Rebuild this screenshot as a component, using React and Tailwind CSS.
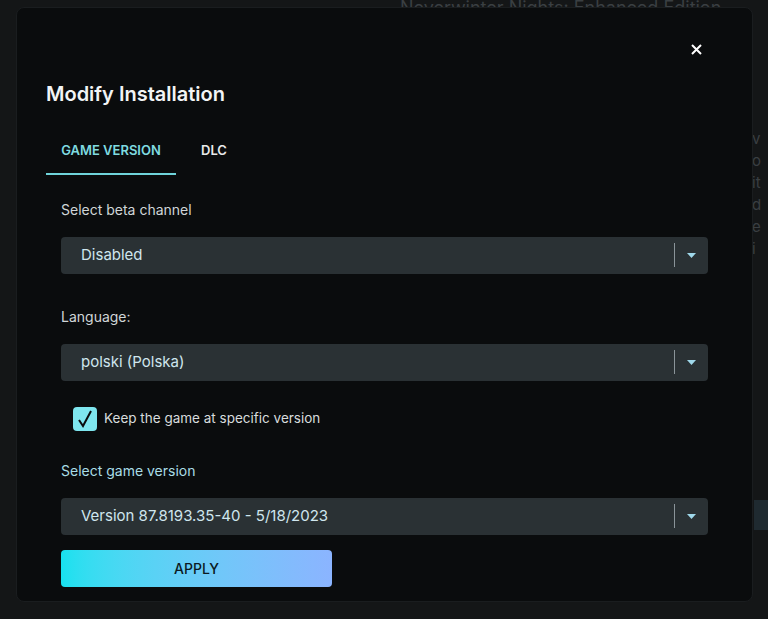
export default function App() {
  const Select = ({ value }) => (
    <div className="flex items-center h-[37px] rounded bg-[#2a3134] pl-5 pr-3 text-[#cfe6ee] text-[15px]">
      <span className="flex-1">{value}</span>
      <div className="w-px h-[24px] bg-[#8a9499] mr-3" />
      <svg width="9" height="5" viewBox="0 0 9 5"><path d="M0 0h9L4.5 5z" fill="#9fd8ea" /></svg>
    </div>
  );
  return (
    <div className="w-[768px] h-[619px] bg-[#141617] relative overflow-hidden" style={{ fontFamily: "Inter, 'Noto Sans', sans-serif" }}>
      <div className="absolute left-[400px] -top-[6px] text-[#3a3f42] text-[18px] whitespace-nowrap">Neverwinter Nights: Enhanced Edition</div>
      <div className="absolute left-[752px] top-[128px] text-[#3a3f42] text-[15px] leading-[22px]">v<br/>o<br/>it<br/>d<br/>e<br/>i</div>
      <div className="absolute left-[754px] top-[500px] w-[14px] h-[30px] bg-[#1f2a30]" />
      <div className="absolute left-[16px] top-[7px] w-[737px] h-[595px] rounded-lg bg-[#0a0c0d] border border-[#1a1d1f] px-[29px]">
        <div className="flex justify-end pt-[36px] pr-[21px]">
          <svg width="11" height="11" viewBox="0 0 11 11"><path d="M1 1l9 9M10 1l-9 9" stroke="#fff" strokeWidth="2" /></svg>
        </div>
        <h1 className="mt-[24px] text-[20px] font-semibold text-[#f2f4f5]">Modify Installation</h1>
        <div className="flex mt-[32px] text-[13px] font-semibold">
          <div className="w-[130px] text-center pb-[12px] text-[#7fdbe0] border-b-2 border-[#6fd4da] whitespace-nowrap">GAME VERSION</div>
          <div className="ml-[25px] text-[#e8eaea]">DLC</div>
        </div>
        <div className="px-[15px]">
          <div className="mt-[24px] text-[14px] text-[#d0d6d8]">Select beta channel</div>
          <div className="mt-[17px]"><Select value="Disabled" /></div>
          <div className="mt-[32px] text-[14px] text-[#d0d6d8]">Language:</div>
          <div className="mt-[17px]"><Select value="polski (Polska)" /></div>
          <div className="flex items-center mt-[26px] ml-[12px] gap-[7px]">
            <div className="w-[24px] h-[24px] rounded bg-[#7ee6ee] flex items-center justify-center">
              <svg width="16" height="18" viewBox="0 0 16 18"><path d="M2 10l4 6L14 1" stroke="#0a0c0d" strokeWidth="2" fill="none" /></svg>
            </div>
            <span className="text-[13.5px] text-[#d8dcdd]">Keep the game at specific version</span>
          </div>
          <div className="mt-[29px] text-[14px] text-[#a9dde6]">Select game version</div>
          <div className="mt-[17px]"><Select value="Version 87.8193.35-40 - 5/18/2023" /></div>
          <button className="mt-[15px] w-[271px] h-[37px] rounded bg-gradient-to-r from-[#16e1ef] to-[#8bb4ff] text-[14px] font-medium text-[#0b1a22]">APPLY</button>
        </div>
      </div>
    </div>
  );
}
